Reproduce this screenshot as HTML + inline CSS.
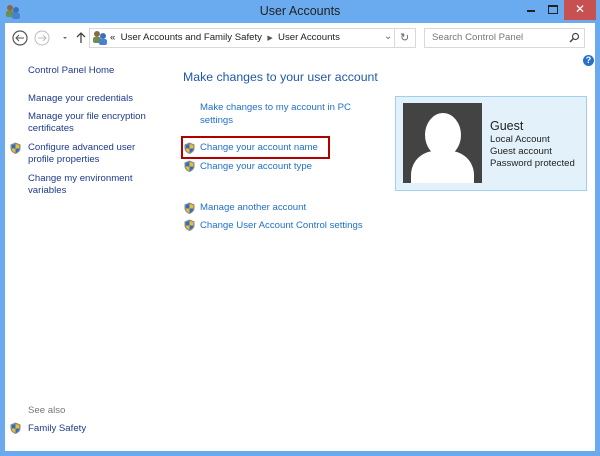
<!DOCTYPE html>
<html><head><style>
*{margin:0;padding:0;box-sizing:border-box}
body{width:600px;height:456px;background:#6aabf0;font-family:"Liberation Sans",sans-serif;font-size:9.6px;position:relative;overflow:hidden}
.abs{position:absolute;white-space:nowrap}
.win{position:absolute;left:5px;top:23px;width:590px;height:428px;background:#fff}
.nav{color:#1e3a8a}
.lnk{color:#1f6fc9}
.shield{position:absolute;width:11px;height:12px}
</style></head><body>
<svg class="abs" style="left:5px;top:4px" width="16" height="15"><circle cx="5" cy="4" r="3" fill="#8a6a40"/><rect x="1" y="7" width="8" height="6" rx="2" fill="#6a8f50"/><circle cx="11" cy="6" r="3" fill="#3a6fc0"/><rect x="7" y="9" width="8" height="6" rx="2" fill="#4a80d0"/></svg>
<div class="abs" style="left:0;width:600px;top:4px;text-align:center;font-size:12.5px;color:#222">User Accounts</div>
<div class="abs" style="left:527px;top:10px;width:8px;height:2px;background:#222"></div>
<div class="abs" style="left:548px;top:5px;width:10px;height:9px;border:1px solid #222;border-top-width:2px"></div>
<div class="abs" style="left:564px;top:0;width:32px;height:20px;background:#c75050;color:#fff;text-align:center;font-size:12px;line-height:19px">✕</div>
<div class="win"></div>
<svg class="abs" style="left:11px;top:29px" width="80" height="18"><circle cx="9" cy="9" r="7" fill="none" stroke="#555" stroke-width="1.2"/><path d="M13 9H5M8 6L5 9l3 3" stroke="#555" fill="none"/><circle cx="31" cy="9" r="7" fill="none" stroke="#bbb"/><path d="M27 9h8M32 6l3 3-3 3" stroke="#bbb" fill="none"/><path d="M52 8l2 2 2-2z" fill="#666"/><path d="M70 14V4M66 8l4-4 4 4" stroke="#444" fill="none" stroke-width="1.3"/></svg>
<div class="abs" style="left:89px;top:28px;width:306px;height:20px;border:1px solid #d9d9d9"></div>
<div class="abs" style="left:395px;top:28px;width:21px;height:20px;border:1px solid #d9d9d9;border-left:none"></div>
<svg class="abs" style="left:92px;top:30px" width="16" height="15"><circle cx="5" cy="4" r="3" fill="#8a6a40"/><rect x="1" y="7" width="8" height="6" rx="2" fill="#6a8f50"/><circle cx="11" cy="6" r="3" fill="#3a6fc0"/><rect x="7" y="9" width="8" height="6" rx="2" fill="#4a80d0"/></svg>
<div class="abs" style="left:110px;top:32px;color:#222">«&nbsp; User Accounts and Family Safety &nbsp;<span style="font-size:7px;color:#555">▶</span>&nbsp; User Accounts</div>
<div class="abs" style="left:384px;top:31px;color:#666;font-size:10px">⌄</div>
<div class="abs" style="left:400px;top:31px;color:#666;font-size:11px">↻</div>
<div class="abs" style="left:424px;top:28px;width:161px;height:20px;border:1px solid #d9d9d9"></div>
<div class="abs" style="left:432px;top:32px;color:#777">Search Control Panel</div>
<svg class="abs" style="left:569px;top:32px" width="11" height="11"><circle cx="6.5" cy="4.5" r="3" fill="none" stroke="#444" stroke-width="1.2"/><path d="M4.5 6.5L1 10" stroke="#444" stroke-width="1.5"/></svg>
<div class="abs" style="left:583px;top:55px;width:11px;height:11px;border-radius:50%;background:#2a6fc9;color:#fff;font-size:9px;font-weight:bold;text-align:center;line-height:11px">?</div>

<div class="abs nav" style="left:28px;top:65px">Control Panel Home</div>
<div class="abs nav" style="left:28px;top:93px">Manage your credentials</div>
<div class="abs nav" style="left:28px;top:111px;line-height:12px">Manage your file encryption<br>certificates</div>
<div class="abs nav" style="left:28px;top:142px;line-height:12px">Configure advanced user<br>profile properties</div>
<div class="abs nav" style="left:28px;top:173px;line-height:12px">Change my environment<br>variables</div>
<div class="abs" style="left:28px;top:405px;color:#777">See also</div>
<div class="abs nav" style="left:28px;top:423px">Family Safety</div>

<div class="abs" style="left:183px;top:70px;font-size:12.3px;color:#1e5aa8">Make changes to your user account</div>
<div class="abs lnk" style="left:200px;top:101px;line-height:13px">Make changes to my account in PC<br>settings</div>
<div class="abs" style="left:181px;top:136px;width:149px;height:23px;border:2px solid #b00000"></div>
<div class="abs lnk" style="left:200px;top:142px">Change your account name</div>
<div class="abs lnk" style="left:200px;top:161px">Change your account type</div>
<div class="abs lnk" style="left:200px;top:202px">Manage another account</div>
<div class="abs lnk" style="left:200px;top:220px">Change User Account Control settings</div>

<div class="abs" style="left:395px;top:96px;width:192px;height:95px;background:#e3f1fb;border:1px solid #9fd0ef"></div>
<div class="abs" style="left:403px;top:103px;width:79px;height:80px;background:#434343;overflow:hidden">
<div style="position:absolute;left:22px;top:10px;width:36px;height:44px;border-radius:50%;background:#fff"></div>
<div style="position:absolute;left:8px;top:48px;width:63px;height:50px;border-radius:24px 24px 0 0;background:#fff"></div>
</div>
<div class="abs" style="left:490px;top:119px;font-size:12.5px;color:#222">Guest</div>
<div class="abs" style="left:490px;top:134px;color:#222;line-height:12px">Local Account<br>Guest account<br>Password protected</div>

<svg width="0" height="0" style="position:absolute"><defs><g id="sh"><path d="M5.5 0.5L10.5 2.5V6.5C10.5 9 8 11 5.5 12 3 11 0.5 9 0.5 6.5V2.5Z" fill="#8a8a8a"/><path d="M5.5 2V6.5H1.8V3.3Z" fill="#2a6fd0"/><path d="M5.5 2V6.5H9.2V3.3Z" fill="#f0c020"/><path d="M5.5 6.5V10.8C3.5 10 1.8 8.5 1.8 6.5Z" fill="#f0c020"/><path d="M5.5 6.5V10.8C7.5 10 9.2 8.5 9.2 6.5Z" fill="#2a6fd0"/></g></defs></svg>
<svg class="shield" style="left:10px;top:142px"><use href="#sh"/></svg>
<svg class="shield" style="left:10px;top:422px"><use href="#sh"/></svg>
<svg class="shield" style="left:184px;top:142px"><use href="#sh"/></svg>
<svg class="shield" style="left:184px;top:160px"><use href="#sh"/></svg>
<svg class="shield" style="left:184px;top:202px"><use href="#sh"/></svg>
<svg class="shield" style="left:184px;top:219px"><use href="#sh"/></svg>
</body></html>
